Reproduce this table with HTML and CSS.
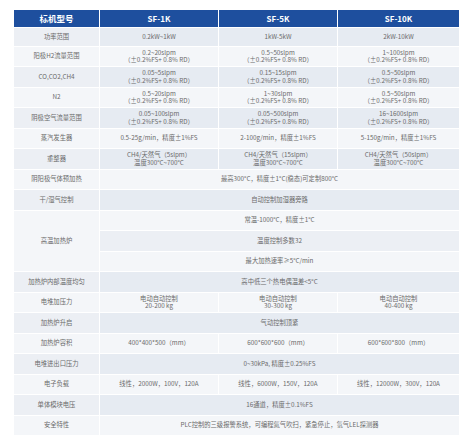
FILE: index.html
```html
<!DOCTYPE html>
<html lang="zh">
<head>
<meta charset="utf-8">
<link rel="stylesheet" href="styles.css">
</head>
<body>
<table class="spec">
  <colgroup>
    <col class="c1"><col class="c2"><col class="c3"><col class="c4">
  </colgroup>
  <thead>
    <tr><th>标机型号</th><th>SF-1K</th><th>SF-5K</th><th>SF-10K</th></tr>
  </thead>
  <tbody>
    <tr class="short"><td>功率范围</td><td>0.2kW~1kW</td><td>1kW-5kW</td><td>2kW-10kW</td></tr>
    <tr><td>阳极H2流量范围</td><td>0.2~20slpm<br>（±0.2%FS+ 0.8% RD）</td><td>0.5~50slpm<br>（±0.2%FS+ 0.8% RD）</td><td>1~100slpm<br>（±0.2%FS+ 0.8% RD）</td></tr>
    <tr><td>CO,CO2,CH4</td><td>0.05~5slpm<br>（±0.2%FS+ 0.8% RD）</td><td>0.15~15slpm<br>（±0.2%FS+ 0.8% RD）</td><td>0.5~50slpm<br>（±0.2%FS+ 0.8% RD）</td></tr>
    <tr><td>N2</td><td>0.5~20slpm<br>（±0.2%FS+ 0.8% RD）</td><td>1~30slpm<br>（±0.2%FS+ 0.8% RD）</td><td>0.5~50slpm<br>（±0.2%FS+ 0.8% RD）</td></tr>
    <tr><td>阴极空气流量范围</td><td>0.05~100slpm<br>（±0.2%FS+ 0.8% RD）</td><td>0.05~500slpm<br>（±0.2%FS+ 0.8% RD）</td><td>16~1600slpm<br>（±0.2%FS+ 0.8% RD）</td></tr>
    <tr><td>蒸汽发生器</td><td>0.5-25g/min，精度±1%FS</td><td>2-100g/min，精度±1%FS</td><td>5-150g/min，精度±1%FS</td></tr>
    <tr><td>重整器</td><td>CH4/天然气（5slpm）<br>温度300°C~700°C</td><td>CH4/天然气（15slpm）<br>温度300°C~700°C</td><td>CH4/天然气（50slpm）<br>温度300°C~700°C</td></tr>
    <tr><td>阴阳极气体预加热</td><td colspan="3">最高300°C，精度±1°C(稳态)可定制800°C</td></tr>
    <tr><td>干/湿气控制</td><td colspan="3">自动控制加湿器旁路</td></tr>
    <tr><td rowspan="3" class="span">高温加热炉</td><td colspan="3">常温-1000°C，精度±1°C</td></tr>
    <tr><td colspan="3">温度控制多数32</td></tr>
    <tr><td colspan="3">最大加热速率≥5°C/min</td></tr>
    <tr><td>加热炉内部温度均匀</td><td colspan="3">高中低三个热电偶温差&lt;5°C</td></tr>
    <tr><td>电堆加压力</td><td>电动自动控制<br>20-200 kg</td><td>电动自动控制<br>30-300 kg</td><td>电动自动控制<br>40-400 kg</td></tr>
    <tr><td>加热炉升启</td><td colspan="3">气动控制顶紧</td></tr>
    <tr><td>加热炉容积</td><td>400*400*500（mm）</td><td>600*600*600（mm）</td><td>600*600*800（mm）</td></tr>
    <tr><td>电堆进出口压力</td><td colspan="3">0~30kPa, 精度±0.25%FS</td></tr>
    <tr><td>电子负载</td><td>线性，2000W，100V，120A</td><td>线性，6000W，150V，120A</td><td>线性，12000W，300V，120A</td></tr>
    <tr><td>单体模块电压</td><td colspan="3">16通道，精度±0.1%FS</td></tr>
    <tr><td>安全特性</td><td colspan="3">PLC控制的三级报警系统，可编程氮气吹扫，紧急停止，氢气LEL探测器</td></tr>
  </tbody>
</table>
</body>
</html>
```
FILE: styles.css
```css
html, body {
  margin: 0;
  padding: 0;
  background: #ffffff;
}
body {
  padding: 9px 0 0 13px;
  font-family: "Noto Sans CJK SC", "Noto Sans", sans-serif;
}
.spec {
  border-collapse: separate;
  border-spacing: 1px;
  table-layout: fixed;
  width: 447px;
}
.c1 { width: 85px; }
.c2 { width: 118px; }
.c3 { width: 118px; }
.c4 { width: 121px; }
.spec th {
  background: #1e4f9e;
  color: #ffffff;
  font-size: 8px;
  font-weight: 700;
  height: 17px;
  padding: 0;
  line-height: 17px;
  text-align: center;
}
.spec th:first-child {
  font-size: 8.5px;
}
.spec td {
  background: #f4f6f9;
  color: #6a6a6a;
  font-size: 6.3px;
  line-height: 7.6px;
  height: 19.5px;
  box-sizing: border-box;
  padding: 0 2px;
  text-align: center;
  vertical-align: middle;
  white-space: nowrap;
}
.spec tbody tr:nth-child(odd) td {
  background: #e6ebf2;
}
.spec tbody tr:nth-child(odd) td:first-child {
  background: #eceff4;
}
.spec tbody tr.short td {
  height: 17.5px;
}
.spec tbody tr td.span {
  background: #f4f6f9;
}
```
